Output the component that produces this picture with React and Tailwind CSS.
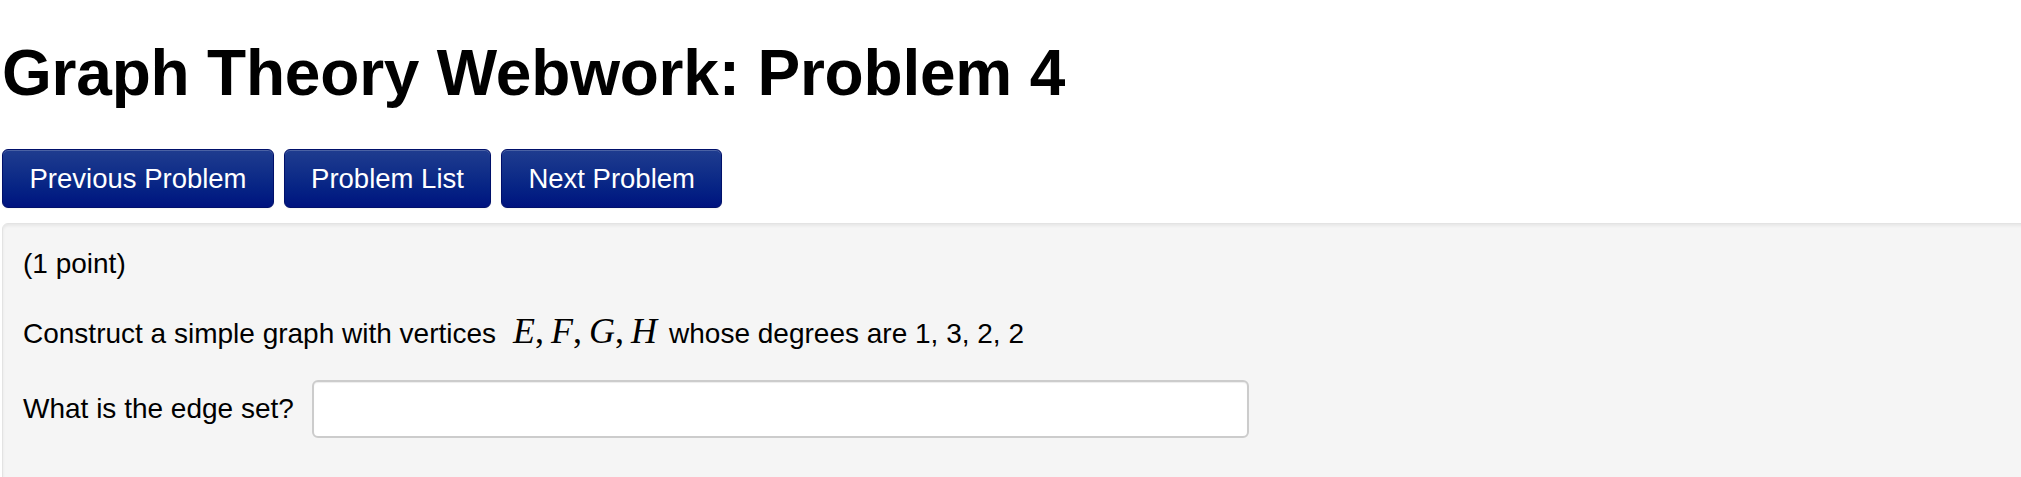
export default function App() {
  const sans = { fontFamily: '"Liberation Sans", Arial, Helvetica, sans-serif' };
  const serif = { fontFamily: '"Liberation Serif", "Times New Roman", serif' };
  const btn =
    "flex h-[59px] items-center rounded-[6px] border border-[#00106a] bg-gradient-to-b from-[#1f3c8f] to-[#00127f] px-[26.5px] text-[27.5px] leading-[40px] text-white shadow-[inset_0_1px_0_rgba(255,255,255,0.2),0_1px_2px_rgba(0,0,0,0.05)]";
  return (
    <div className="min-h-[477px] w-full overflow-hidden bg-white text-black" style={sans}>
      <h1 className="ml-[2px] mt-[41px] text-[64px] font-bold leading-[64px] tracking-[-0.2px]">
        Graph Theory Webwork: Problem 4
      </h1>
      <div className="ml-[2px] mt-[44px] flex gap-[9.5px]">
        <button className={btn}>Previous Problem</button>
        <button className={btn}>Problem List</button>
        <button className={btn}>Next Problem</button>
      </div>
      <div className="ml-[2px] mr-[-10px] mt-[15px] rounded-[6px] border border-[#e3e3e3] bg-[#f5f5f5] px-[20px] pb-[80px] pt-[20px] text-[28px] leading-[40px] shadow-[inset_0_2px_3px_rgba(0,0,0,0.06)]">
        <div className="h-[40px]">(1 point)</div>
        <div className="mt-[29px] h-[40px] whitespace-nowrap">
          Construct a simple graph with vertices
          <span className="ml-[17px] mr-[12px] text-[36px] italic leading-none" style={serif}>
            E<span className="not-italic">,</span>
            <span className="ml-[7px]">F</span>
            <span className="not-italic">,</span>
            <span className="ml-[7px]">G</span>
            <span className="not-italic">,</span>
            <span className="ml-[7px]">H</span>
          </span>
          whose degrees are 1, 3, 2, 2
        </div>
        <div className="mt-[27px] flex h-[58px] items-center gap-[18px]">
          <span className="whitespace-nowrap">What is the edge set?</span>
          <input
            type="text"
            className="h-[58px] w-[937px] rounded-[6px] border-2 border-[#cccccc] bg-white shadow-[inset_0_1px_1px_rgba(0,0,0,0.075)] outline-none"
          />
        </div>
      </div>
    </div>
  );
}
